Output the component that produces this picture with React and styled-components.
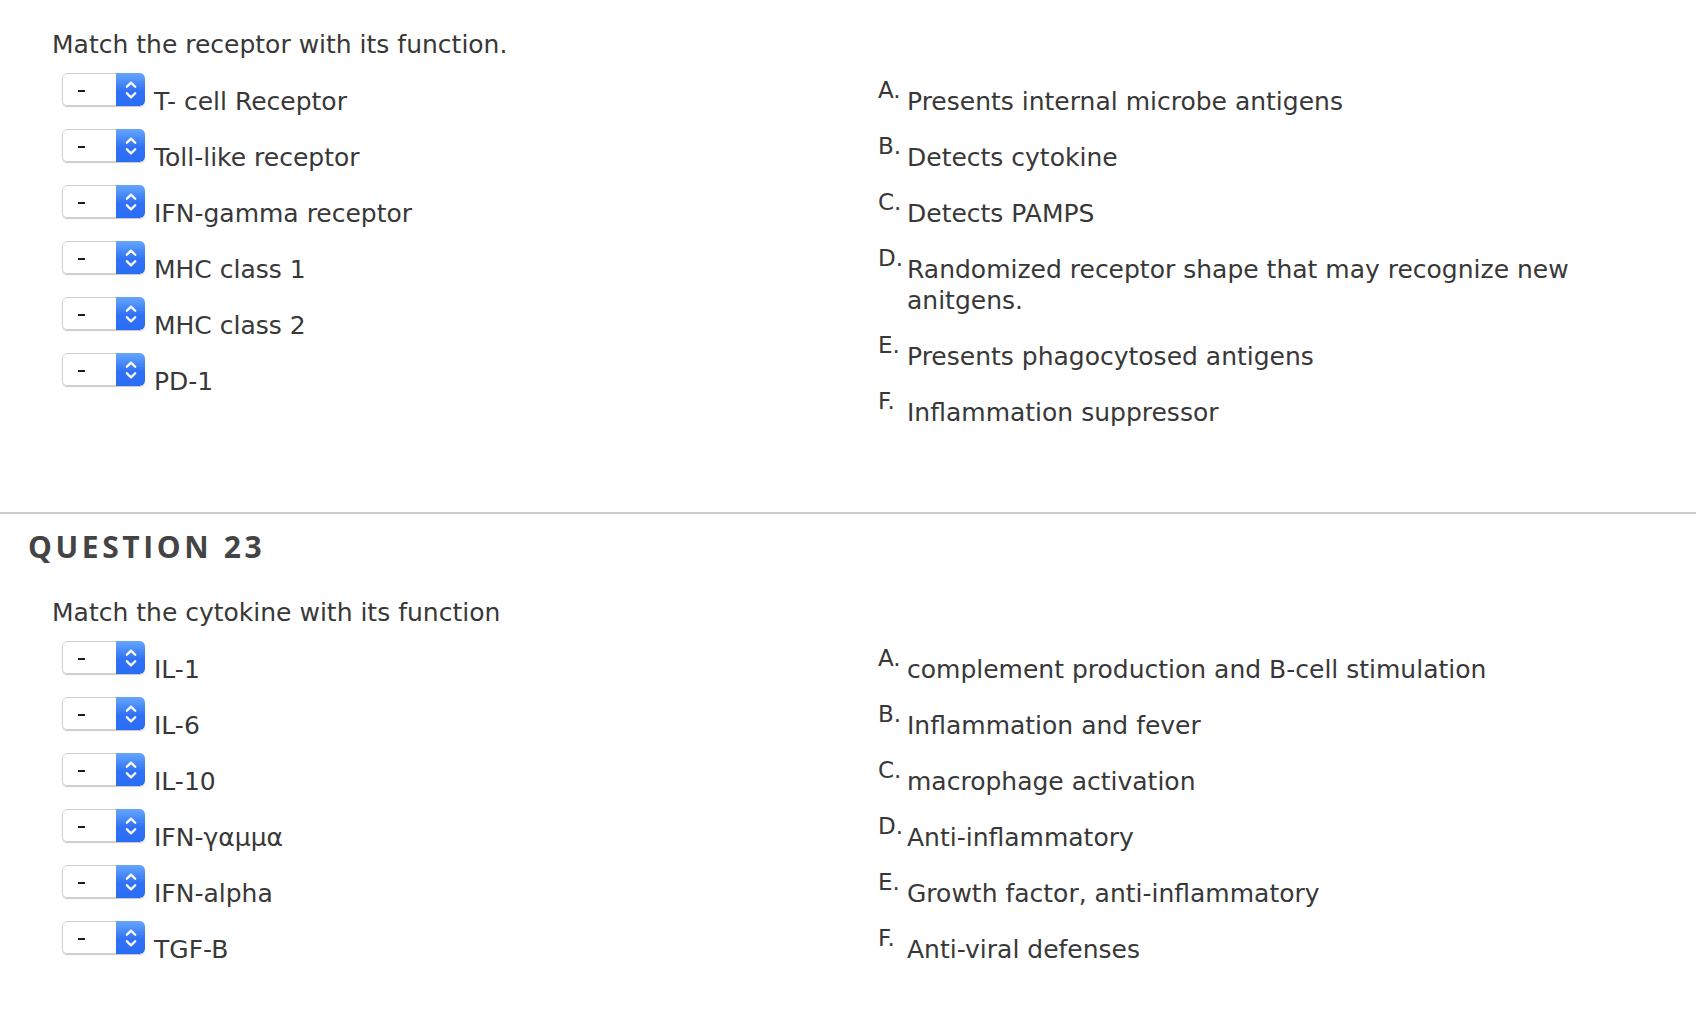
import React from "react";
import styled, { createGlobalStyle } from "styled-components";

const GlobalStyle = createGlobalStyle`
  body {
    margin: 0;
    background: #ffffff;
    font-family: "DejaVu Sans", "Noto Sans", sans-serif;
    color: #383838;
  }
`;

const questions = [
  {
    id: 22,
    showTitle: false,
    prompt: "Match the receptor with its function.",
    items: [
      "T- cell Receptor",
      "Toll-like receptor",
      "IFN-gamma receptor",
      "MHC class 1",
      "MHC class 2",
      "PD-1",
    ],
    answers: [
      "Presents internal microbe antigens",
      "Detects cytokine",
      "Detects PAMPS",
      "Randomized receptor shape that may recognize new anitgens.",
      "Presents phagocytosed antigens",
      "Inflammation suppressor",
    ],
  },
  {
    id: 23,
    showTitle: true,
    prompt: "Match the cytokine with its function",
    items: ["IL-1", "IL-6", "IL-10", "IFN-γαμμα", "IFN-alpha", "TGF-B"],
    answers: [
      "complement production and B-cell stimulation",
      "Inflammation and fever",
      "macrophage activation",
      "Anti-inflammatory",
      "Growth factor, anti-inflammatory",
      "Anti-viral defenses",
    ],
  },
];

const letters = ["A.", "B.", "C.", "D.", "E.", "F."];

function App() {
  return (
    <>
      <GlobalStyle />
      <Page>
        {questions.map((q, qi) => (
          <React.Fragment key={q.id}>
            {qi > 0 && <Divider />}
            <Question first={qi === 0}>
              {q.showTitle && <Title>QUESTION {q.id}</Title>}
              <Prompt>{q.prompt}</Prompt>
              <Matching>
                <LeftList>
                  {q.items.map((item, i) => (
                    <ItemRow key={i}>
                      <FakeSelect>
                        <SelectValue>
                          <Dash />
                        </SelectValue>
                        <SelectArrows>
                          <svg width="12" height="22" viewBox="0 0 12 22">
                            <path
                              d="M1.8 7.8 L6 3.6 L10.2 7.8 M1.8 14.2 L6 18.4 L10.2 14.2"
                              fill="none"
                              stroke="#ffffff"
                              strokeWidth="2.3"
                              strokeLinecap="round"
                              strokeLinejoin="round"
                            />
                          </svg>
                        </SelectArrows>
                      </FakeSelect>
                      <ItemLabel>{item}</ItemLabel>
                    </ItemRow>
                  ))}
                </LeftList>
                <RightList>
                  {q.answers.map((answer, i) => (
                    <AnswerRow key={i}>
                      <Letter>{letters[i]}</Letter>
                      <AnswerText>{answer}</AnswerText>
                    </AnswerRow>
                  ))}
                </RightList>
              </Matching>
            </Question>
          </React.Fragment>
        ))}
      </Page>
    </>
  );
}

export default App;

const Page = styled.div`
  width: 1696px;
  min-height: 1022px;
  background: #ffffff;
`;

const Question = styled.section`
  padding-top: ${(props) => (props.first ? "29px" : "15px")};
  padding-bottom: ${(props) => (props.first ? "84px" : "40px")};
`;

const Divider = styled.div`
  height: 2px;
  background: #cccccc;
`;

const Title = styled.h2`
  margin: 0 0 32px 28px;
  font-family: "Open Sans", "DejaVu Sans", sans-serif;
  font-weight: 700;
  font-size: 30px;
  line-height: 36px;
  letter-spacing: 3.6px;
  color: #444444;
`;

const Prompt = styled.div`
  padding-left: 52px;
  font-size: 25px;
  line-height: 31px;
`;

const Matching = styled.div`
  display: grid;
  grid-template-columns: 816px 1fr;
  padding-left: 62px;
  margin-top: 13px;
`;

const LeftList = styled.div`
  display: flex;
  flex-direction: column;
  gap: 12px;
`;

const ItemRow = styled.div`
  display: flex;
  align-items: flex-start;
  gap: 9px;
`;

const FakeSelect = styled.div`
  display: flex;
  width: 83px;
  height: 33px;
  box-sizing: border-box;
  border-radius: 5px;
  box-shadow: 0 1px 1px rgba(0, 0, 0, 0.22);
  overflow: hidden;
`;

const SelectValue = styled.div`
  flex: 1;
  display: flex;
  align-items: center;
  padding: 2px 0 0 15px;
  background: #ffffff;
  border: 1px solid #cfcfcf;
  border-right: none;
  border-radius: 5px 0 0 5px;
`;

const Dash = styled.span`
  width: 7px;
  height: 2px;
  background: #1e1e1e;
`;

const SelectArrows = styled.div`
  width: 29px;
  display: flex;
  align-items: center;
  justify-content: center;
  background: linear-gradient(#65a6fb, #2f72f6 55%, #2a6df5);
  border-radius: 0 5px 5px 0;
`;

const ItemLabel = styled.div`
  padding-top: 13px;
  font-size: 25px;
  line-height: 31px;
`;

const RightList = styled.div`
  display: flex;
  flex-direction: column;
  gap: 18px;
  margin-top: 6px;
`;

const AnswerRow = styled.div`
  display: flex;
  align-items: flex-start;
`;

const Letter = styled.span`
  width: 29px;
  flex: none;
  font-size: 23px;
  line-height: 22px;
`;

const AnswerText = styled.div`
  max-width: 720px;
  padding-top: 7px;
  font-size: 25px;
  line-height: 31px;
`;
